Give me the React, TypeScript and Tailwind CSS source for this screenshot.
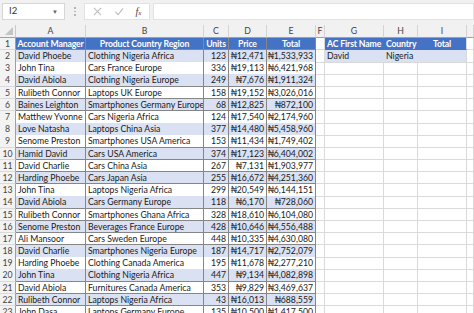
import React from "react";

const COLS =
  "grid grid-cols-[16px_70px_118px_25px_38px_49px_9px_59px_34px_49px_1fr]";

const rows: [string, string, string, string, string][] = [
  ["David Phoebe", "Clothing Nigeria Africa", "123", "₦12,471", "₦1,533,933"],
  ["John Tina", "Cars France Europe", "336", "₦19,113", "₦6,421,968"],
  ["David Abiola", "Clothing Nigeria Europe", "249", "₦7,676", "₦1,911,324"],
  ["Rulibeth Connor", "Laptops UK Europe", "158", "₦19,152", "₦3,026,016"],
  ["Baines Leighton", "Smartphones Germany Europe", "68", "₦12,825", "₦872,100"],
  ["Matthew Yvonne", "Cars Nigeria Africa", "124", "₦17,540", "₦2,174,960"],
  ["Love Natasha", "Laptops China Asia", "377", "₦14,480", "₦5,458,960"],
  ["Senome Preston", "Smartphones USA America", "153", "₦11,434", "₦1,749,402"],
  ["Hamid David", "Cars USA America", "374", "₦17,123", "₦6,404,002"],
  ["David Charlie", "Cars China Asia", "267", "₦7,131", "₦1,903,977"],
  ["Harding Phoebe", "Cars Japan Asia", "255", "₦16,672", "₦4,251,360"],
  ["John Tina", "Laptops Nigeria Africa", "299", "₦20,549", "₦6,144,151"],
  ["David Abiola", "Cars Germany Europe", "118", "₦6,170", "₦728,060"],
  ["Rulibeth Connor", "Smartphones Ghana Africa", "328", "₦18,610", "₦6,104,080"],
  ["Senome Preston", "Beverages France Europe", "428", "₦10,646", "₦4,556,488"],
  ["Ali Mansoor", "Cars Sweden Europe", "448", "₦10,335", "₦4,630,080"],
  ["David Charlie", "Smartphones Nigeria Europe", "187", "₦14,717", "₦2,752,079"],
  ["Harding Phoebe", "Clothing Canada America", "195", "₦11,678", "₦2,277,210"],
  ["John Tina", "Clothing Nigeria Africa", "447", "₦9,134", "₦4,082,898"],
  ["David Abiola", "Furnitures Canada America", "353", "₦9,829", "₦3,469,637"],
  ["Rulibeth Connor", "Laptops Nigeria Africa", "43", "₦16,013", "₦688,559"],
  ["John Dasa", "Laptops Germany Europe", "135", "₦10,500", "₦1,417,500"],
];

function Cell({
  children,
  className = "",
}: {
  children?: React.ReactNode;
  className?: string;
}) {
  return (
    <div
      className={
        "flex items-end overflow-hidden whitespace-nowrap border-r border-b px-[2px] pb-[0.5px] leading-[11px] " +
        className
      }
    >
      {children}
    </div>
  );
}

// naira sign drawn narrow so figures fit the way Calibri sets them
function Money({ v }: { v: string }) {
  return (
    <span>
      <span className="tracking-[-0.6px]">₦</span>
      {v.slice(1)}
    </span>
  );
}

function RowHead({ n }: { n: number }) {
  return (
    <div className="flex items-end justify-center border-r border-b border-r-[#9f9f9f] border-b-[#dadada] bg-[#f3f3f3] pb-[0.5px] leading-[11px] text-[#444]">
      {n}
    </div>
  );
}

function Toolbar() {
  return (
    <div className="flex h-[25px] items-start bg-[#f1f1f1] pt-[3px]">
      <div className="ml-[2px] flex h-[17px] w-[63px] items-center justify-between border border-[#d6d6d6] bg-white px-[6px]">
        <span className="text-[9.5px] text-[#333]">I2</span>
        <span className="text-[6px] text-[#666]">▼</span>
      </div>
      <div className="ml-[9px] flex h-[17px] flex-col items-center justify-center gap-[2px]">
        <span className="h-[1.5px] w-[1.5px] bg-[#b5b5b5]" />
        <span className="h-[1.5px] w-[1.5px] bg-[#b5b5b5]" />
        <span className="h-[1.5px] w-[1.5px] bg-[#b5b5b5]" />
      </div>
      <div className="ml-[8px] flex h-[17px] w-[66px] items-center gap-[12px] border border-[#e2e2e2] bg-white pl-[8px]">
        <svg width="9" height="9" viewBox="0 0 10 10">
          <path d="M1 1 L9 9 M9 1 L1 9" stroke="#bdbdbd" strokeWidth="1.2" />
        </svg>
        <svg width="10" height="9" viewBox="0 0 10 10">
          <path d="M1 5.5 L4 8.5 L9.5 1.5" stroke="#bdbdbd" strokeWidth="1.2" fill="none" />
        </svg>
        <span className="font-['Liberation_Serif',serif] text-[10px] italic text-[#444]">
          f<span className="text-[7px]">x</span>
        </span>
      </div>
      <div className="ml-[3px] h-[17px] flex-1 border border-[#e2e2e2] bg-white" />
    </div>
  );
}

function ColHeads() {
  const letters = ["A", "B", "C", "D", "E", "F", "G", "H", "I", ""];
  return (
    <div className={COLS + " h-[12.9px] bg-[#f1f1f1] text-[#444]"}>
      <div className="relative border-r border-b border-r-[#c9c9c9] border-b-[#9f9f9f]">
        <svg
          className="absolute bottom-[2px] right-[2px]"
          width="8"
          height="8"
          viewBox="0 0 8 8"
        >
          <path d="M8 0 L8 8 L0 8 Z" fill="#c4c4c4" />
        </svg>
      </div>
      {letters.map((l, i) => (
        <div
          key={i}
          className="flex items-end justify-center border-r border-b border-r-[#d4d4d4] border-b-[#9f9f9f] pb-[0.5px] leading-[11px]"
        >
          {l}
        </div>
      ))}
    </div>
  );
}

export default function App() {
  const dark = "border-[#868686]";
  const grid = "border-[#dadada]";
  const head = "bg-[#4472c4] font-bold text-white tracking-[-0.15px]";
  return (
    <div className="h-[313px] w-[474px] overflow-hidden bg-white font-['Lato',sans-serif] text-[8.7px] text-[#1a1a1a]">
      <Toolbar />
      <ColHeads />
      {/* header row */}
      <div className={COLS + " h-[12.2px]"}>
        <RowHead n={1} />
        <Cell className={`${dark} ${head} justify-center`}>Account Manager</Cell>
        <Cell className={`${dark} ${head} justify-center`}>
          Product Country Region
        </Cell>
        <Cell className={`${dark} ${head} justify-center`}>Units</Cell>
        <Cell className={`${dark} ${head} justify-center`}>Price</Cell>
        <Cell className={`${dark} ${head} justify-center`}>Total</Cell>
        <Cell className={grid} />
        <Cell className={`${head} border-[#4472c4]`}>AC First Name</Cell>
        <Cell className={`${head} border-[#4472c4]`}>Country</Cell>
        <Cell className={`${head} justify-center border-b-[#4472c4] border-r-[#dadada]`}>
          Total
        </Cell>
        <Cell className={grid} />
      </div>
      {rows.map((r, i) => {
        const n = i + 2;
        const band = n % 2 === 0 ? "bg-[#d9e1f2]" : "bg-white";
        return (
          <div key={n} className={COLS + " h-[12.2px]"}>
            <RowHead n={n} />
            <Cell className={`${dark} ${band}`}>{r[0]}</Cell>
            <Cell className={`${dark} ${band}`}>{r[1]}</Cell>
            <Cell className={`${dark} ${band} justify-end`}>{r[2]}</Cell>
            <Cell className={`${dark} ${band} justify-end`}>
              <Money v={r[3]} />
            </Cell>
            <Cell className={`${dark} ${band} justify-end`}>
              <Money v={r[4]} />
            </Cell>
            <Cell className={grid} />
            {n === 2 ? (
              <>
                <Cell className="border-r-[#d9e1f2] border-b-[#dadada] bg-[#d9e1f2]">
                  David
                </Cell>
                <Cell className="border-r-[#d9e1f2] border-b-[#dadada] bg-[#d9e1f2]">
                  Nigeria
                </Cell>
                <Cell className="border-[#dadada] bg-[#d9e1f2]" />
              </>
            ) : (
              <>
                <Cell className={grid} />
                <Cell className={grid} />
                <Cell className={grid} />
              </>
            )}
            <Cell className={grid} />
          </div>
        );
      })}
    </div>
  );
}
